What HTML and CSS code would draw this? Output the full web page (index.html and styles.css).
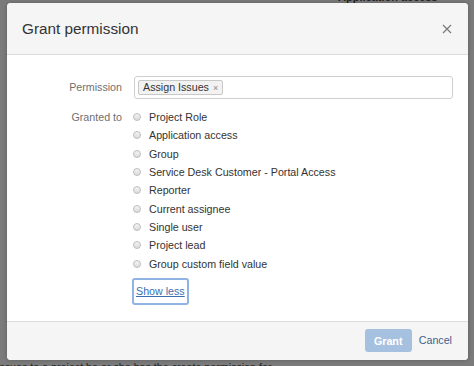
FILE: index.html
```html
<!DOCTYPE html>
<html lang="en">
  <head>
    <meta charset="UTF-8" />
    <meta name="viewport" content="width=device-width, initial-scale=1.0" />
    <title>Grant permission</title>
    <link rel="stylesheet" href="styles.css">
  </head>
  <body>
    <div class="page">
      <div class="page-top">Application access</div>
      <div class="page-bottom">issues to a project he or she has the create permission for.</div>
    </div>

    <div class="dialog">
      <div class="dialog-header">
        <h2>Grant permission</h2>
        <button class="close" aria-label="Close">
          <svg width="10" height="10" viewBox="0 0 10 10">
            <path d="M1 1L9 9M9 1L1 9" stroke="#7a7a7a" stroke-width="1.2" fill="none" />
          </svg>
        </button>
      </div>

      <form class="dialog-body">
        <div class="row">
          <label class="label">Permission</label>
          <div class="field">
            <div class="select">
              <span class="tag">Assign Issues <span class="tag-x">&times;</span></span>
            </div>
          </div>
        </div>

        <div class="row granted">
          <label class="label">Granted to</label>
          <div class="field">
            <ul class="radios">
              <li><span class="radio"></span>Project Role</li>
              <li><span class="radio"></span>Application access</li>
              <li><span class="radio"></span>Group</li>
              <li><span class="radio"></span>Service Desk Customer - Portal Access</li>
              <li><span class="radio"></span>Reporter</li>
              <li><span class="radio"></span>Current assignee</li>
              <li><span class="radio"></span>Single user</li>
              <li><span class="radio"></span>Project lead</li>
              <li><span class="radio"></span>Group custom field value</li>
            </ul>
            <a href="#" class="show-less">Show less</a>
          </div>
        </div>
      </form>

      <div class="dialog-footer">
        <button class="grant" disabled>Grant</button>
        <a href="#" class="cancel">Cancel</a>
      </div>
    </div>
  </body>
</html>
```

FILE: styles.css
```css
* {
  margin: 0;
  padding: 0;
  box-sizing: border-box;
  font-family: "Liberation Sans", Arial, sans-serif;
}

html,
body {
  width: 474px;
  height: 366px;
  overflow: hidden;
  background: #7b7b7b;
}

body {
  position: relative;
  font-size: 10.7px;
  color: #333;
}

.page {
  height: 366px;
  display: flex;
  flex-direction: column;
  justify-content: space-between;
  color: #262626;
}

.page-top {
  font-weight: bold;
  font-size: 11px;
  padding-left: 338px;
  line-height: 1;
  margin-top: -8px;
}

.page-bottom {
  margin-left: -3px;
  line-height: 12px;
  margin-bottom: -7px;
}

.dialog {
  position: absolute;
  left: 7px;
  top: 3px;
  width: 461px;
  height: 357px;
  background: #fff;
  border-radius: 4px;
  overflow: hidden;
  display: flex;
  flex-direction: column;
  box-shadow: 0 0 4px rgba(0, 0, 0, 0.25);
}

.dialog-header {
  height: 52px;
  background: #f5f5f5;
  border-bottom: 1px solid #dcdcdc;
  display: flex;
  align-items: center;
  justify-content: space-between;
  padding: 0 16px 0 15px;
}

.dialog-header h2 {
  font-size: 15.3px;
  font-weight: normal;
  color: #333;
}

.close {
  border: none;
  background: none;
  width: 10px;
  height: 10px;
  display: flex;
}

.dialog-body {
  flex: 1;
  padding: 21px 15px 0 0;
}

.row {
  display: flex;
  gap: 12px;
}

.label {
  width: 115px;
  flex-shrink: 0;
  text-align: right;
  color: #707070;
  line-height: 23px;
}

.field {
  flex: 1;
}

.select {
  height: 23px;
  border: 1px solid #cfcfcf;
  border-radius: 3px;
  padding: 2px 3px;
  display: flex;
  align-items: center;
}

.tag {
  height: 15px;
  line-height: 13px;
  padding: 0 4px;
  background: #f2f2f2;
  border: 1px solid #c8c8c8;
  border-radius: 2px;
  color: #333;
}

.tag-x {
  color: #888;
  font-size: 9px;
  margin-left: 1px;
}

.granted {
  margin-top: 9px;
}

.granted .label {
  line-height: 18.3px;
}

.radios {
  list-style: none;
}

.radios li {
  height: 18.3px;
  display: flex;
  align-items: center;
}

.radio {
  width: 8px;
  height: 8px;
  border: 1px solid #bdbdbd;
  border-radius: 50%;
  background: linear-gradient(#f4f4f4, #dcdcdc);
  margin: 0 8px 0 -1px;
}

.show-less {
  display: inline-block;
  margin: 5px 0 0 -2px;
  padding: 6px 2px 6px 2px;
  border: 2px solid #8fb3e2;
  border-radius: 3px;
  color: #3b6fb0;
  line-height: 11px;
  text-decoration: underline;
}

.dialog-footer {
  height: 39px;
  background: #f5f5f5;
  border-top: 1px solid #dcdcdc;
  display: flex;
  align-items: flex-start;
  justify-content: flex-end;
  gap: 7px;
  padding: 7px 16px 0 0;
}

.grant {
  width: 47px;
  height: 23px;
  border: none;
  border-radius: 3px;
  background: #a6c1df;
  color: #fff;
  font-weight: bold;
  font-size: 10.7px;
}

.cancel {
  line-height: 23px;
  color: #3e5f8e;
  text-decoration: none;
}
```
